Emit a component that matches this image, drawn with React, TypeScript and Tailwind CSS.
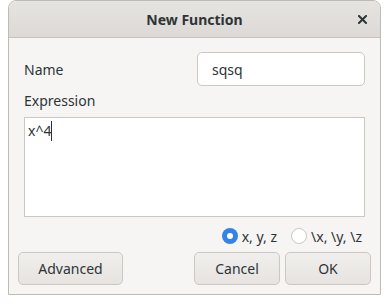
import React from "react";

export default function App() {
  return (
    <div className="w-[390px] h-[304px] bg-white" style={{ fontFamily: '"Noto Sans", "Open Sans", sans-serif' }}>
      <div className="ml-[8px] w-[373px] h-[295px] flex flex-col rounded-t-[8px] border border-[#c0bab4] bg-[#f6f5f4] overflow-hidden text-[#2e3436]">
        <div className="relative h-[37px] shrink-0 flex items-center justify-center bg-gradient-to-b from-[#e6e4e1] to-[#dcd9d6] border-b border-[#c6c1bb]">
          <span className="text-[14px] font-bold text-[#2e3436]">New Function</span>
          <svg className="absolute right-[13px] top-[14px]" width="9" height="9" viewBox="0 0 9 9">
            <path d="M1 1 L8 8 M8 1 L1 8" stroke="#2e3436" strokeWidth="2" strokeLinecap="square" />
          </svg>
        </div>
        <div className="flex flex-col px-[15px] pt-[14px]">
          <div className="flex items-center justify-between h-[34px]">
            <span className="text-[14px]">Name</span>
            <div className="w-[168px] h-[34px] rounded-[5px] border border-[#cdc7c2] bg-white flex items-center pl-[14px] text-[14px]">
              sqsq
            </div>
          </div>
          <div className="mt-[5px] h-[20px] text-[14px] leading-[20px]">Expression</div>
          <div className="mt-[6px] h-[100px] border border-[#cdc7c2] bg-white px-[3px] pt-[3px] text-[14px] leading-[20px] flex items-start">
            <span>x^4</span>
            <span className="inline-block w-px h-[20px] bg-[#2e3436]"></span>
          </div>
          <div className="mt-[9px] h-[20px] flex items-center justify-end gap-[4px] text-[14px] pr-[3px]">
            <span className="w-[16px] h-[16px] rounded-full bg-[#3584e4] flex items-center justify-center">
              <span className="w-[6px] h-[6px] rounded-full bg-white"></span>
            </span>
            <span className="mr-[10px]">x, y, z</span>
            <span className="w-[16px] h-[16px] rounded-full border border-[#cdc7c2] bg-white"></span>
            <span>\x, \y, \z</span>
          </div>
        </div>
        <div className="mt-[6px] px-[9px] flex items-center gap-[5px]">
          <button className="w-[105px] h-[33px] rounded-[5px] border border-[#cdc7c2] bg-gradient-to-b from-[#f1efed] to-[#e6e3e0] text-[14px] text-[#2e3436]">
            Advanced
          </button>
          <div className="flex-1"></div>
          <button className="w-[86px] h-[33px] rounded-[5px] border border-[#cdc7c2] bg-gradient-to-b from-[#f1efed] to-[#e6e3e0] text-[14px] text-[#2e3436]">
            Cancel
          </button>
          <button className="w-[86px] h-[33px] rounded-[5px] border border-[#cdc7c2] bg-gradient-to-b from-[#f1efed] to-[#e6e3e0] text-[14px] text-[#2e3436]">
            OK
          </button>
        </div>
      </div>
    </div>
  );
}
